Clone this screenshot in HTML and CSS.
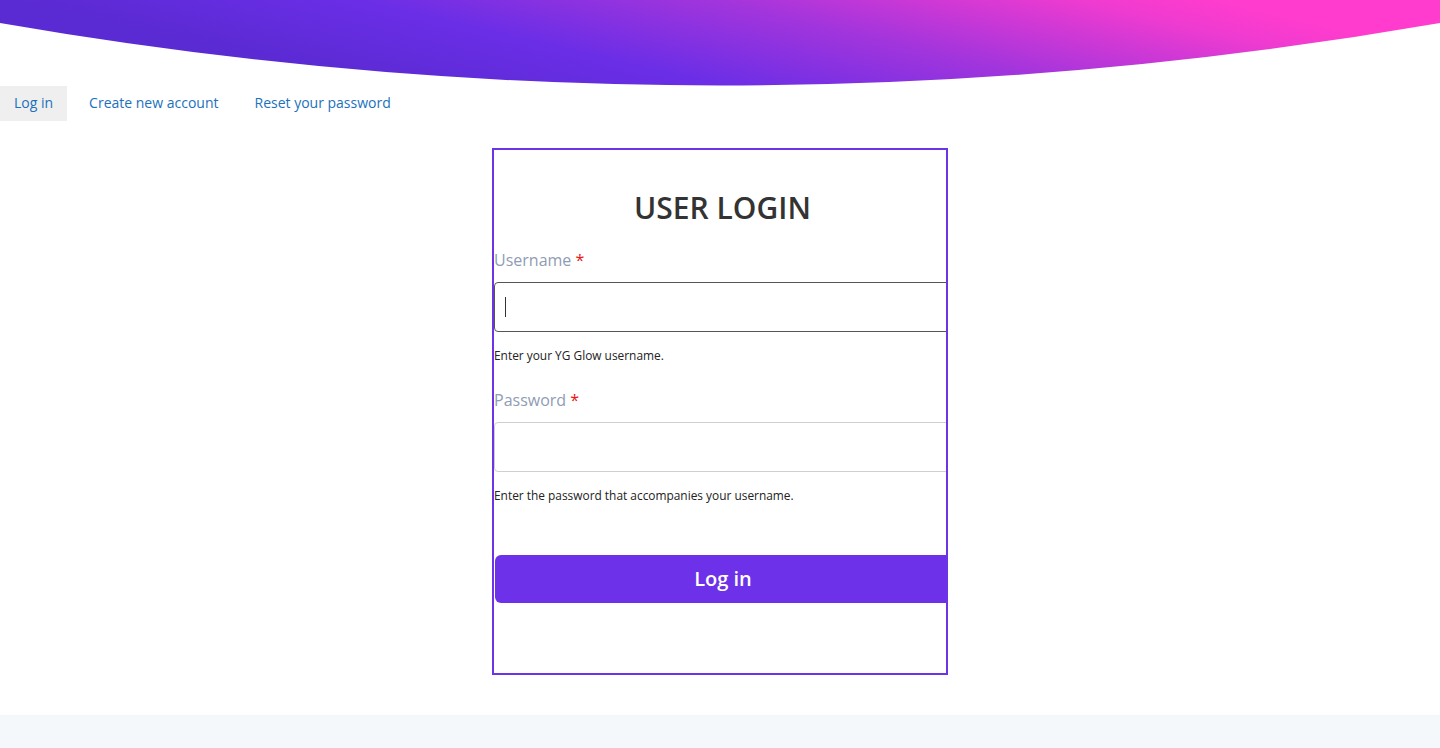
FILE: index.html
```html
<!DOCTYPE html>
<html lang="en">
<head>
<meta charset="utf-8">
<title>User login</title>
<link rel="stylesheet" href="styles.css">
</head>
<body>
<header class="hero">
  <svg class="hero-shape" width="1440" height="86" viewBox="0 0 1440 86" preserveAspectRatio="none" aria-hidden="true">
    <defs>
      <linearGradient id="heroGrad" gradientUnits="userSpaceOnUse" x1="0" y1="0" x2="64" y2="-272">
        <stop offset="0" stop-color="#5a2ad2"/>
        <stop offset="0.29" stop-color="#6a2ee6"/>
        <stop offset="0.59" stop-color="#a335dc"/>
        <stop offset="0.89" stop-color="#f03bd0"/>
        <stop offset="1" stop-color="#ff3ccd"/>
      </linearGradient>
    </defs>
    <path d="M0 0 H1440 V23 Q720 148 0 23 Z" fill="url(#heroGrad)"/>
  </svg>
</header>

<nav class="tabs">
  <a class="tab tab-active" href="#">Log in</a>
  <a class="tab" href="#">Create new account</a>
  <a class="tab" href="#">Reset your password</a>
</nav>

<main class="main">
  <section class="card">
    <h1 class="card-title">USER LOGIN</h1>
    <form class="login-form">
      <div class="field">
        <label class="field-label" for="edit-name">Username <span class="req">*</span></label>
        <div class="input-wrap">
          <input class="field-input field-input-focus" id="edit-name" type="text">
          <span class="caret"></span>
        </div>
        <div class="field-desc">Enter your YG Glow username.</div>
      </div>
      <div class="field">
        <label class="field-label" for="edit-pass">Password <span class="req">*</span></label>
        <div class="input-wrap">
          <input class="field-input" id="edit-pass" type="password">
        </div>
        <div class="field-desc">Enter the password that accompanies your username.</div>
      </div>
      <button class="submit" type="button">Log in</button>
    </form>
  </section>
</main>

<footer class="footer"></footer>
</body>
</html>
```

FILE: styles.css
```css
* { box-sizing: border-box; }

html, body {
  margin: 0;
  padding: 0;
  background: #ffffff;
  font-family: "Open Sans", "Noto Sans", "Liberation Sans", sans-serif;
  color: #222222;
}

.hero {
  height: 86px;
  overflow: hidden;
}

.hero-shape {
  display: block;
}

.tabs {
  display: flex;
  gap: 8px;
  height: 35px;
}

.tab {
  display: block;
  padding: 0 14px;
  height: 35px;
  line-height: 34px;
  font-size: 14px;
  color: #2071bd;
  text-decoration: none;
}

.tab-active {
  background: #efefef;
}

.main {
  padding: 27px 0 40px;
}

.card {
  width: 456px;
  margin: 0 auto;
  border: 2px solid #6b34e6;
  padding: 37px 0 70px;
  overflow: hidden;
}

.card-title {
  margin: 0;
  padding: 2px 0 0 5px;
  font-size: 30px;
  line-height: 38px;
  font-weight: 600;
  color: #333333;
  text-align: center;
}

.login-form {
  display: flex;
  flex-direction: column;
}

.field {
  margin-top: 21px;
}

.field + .field {
  margin-top: 24px;
}

.field-label {
  display: block;
  font-size: 16px;
  line-height: 25px;
  color: #8f9cb3;
  margin-bottom: 9px;
}

.req {
  color: #ee1111;
}

.input-wrap {
  position: relative;
}

.field-input {
  display: block;
  width: calc(100% + 20px);
  height: 50px;
  margin: 0;
  padding: 0 10px;
  border: 1px solid #cfcfcf;
  border-radius: 4px;
  background: #ffffff;
  font-family: inherit;
  font-size: 16px;
  outline: none;
}

.field-input-focus {
  border-color: #555555;
}

.caret {
  position: absolute;
  left: 11px;
  top: 15px;
  width: 1px;
  height: 20px;
  background: #333333;
}

.field-desc {
  margin-top: 14px;
  font-size: 11.9px;
  line-height: 18px;
  color: #222222;
}

.submit {
  display: block;
  margin: 51px 0 0 1px;
  width: calc(100% + 20px);
  height: 48px;
  border: 0;
  border-radius: 6px;
  background: #6c31e8;
  color: #ffffff;
  font-family: inherit;
  font-size: 20px;
  font-weight: 600;
  padding: 0 16px 2px 0;
  cursor: pointer;
}

.footer {
  height: 60px;
  background: #f4f8fb;
}
```
